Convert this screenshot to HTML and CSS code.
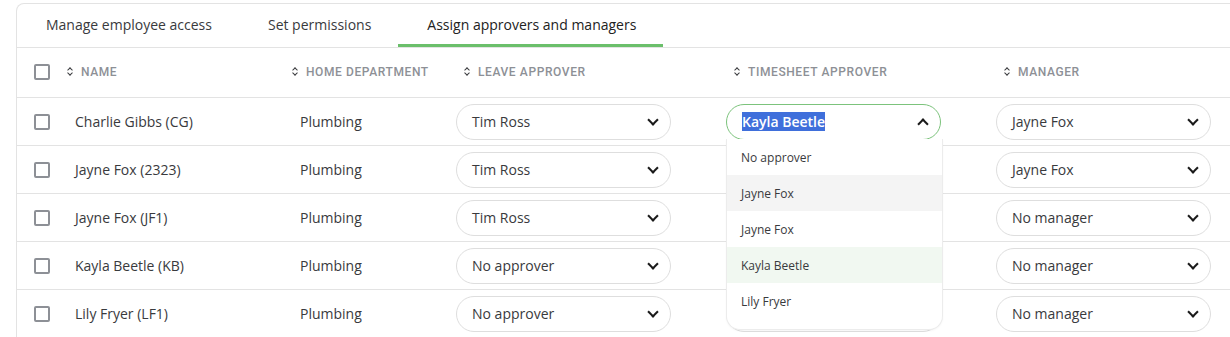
FILE: index.html
```html
<!DOCTYPE html>
<html lang="en">
  <head>
    <meta charset="UTF-8" />
    <meta name="viewport" content="width=device-width, initial-scale=1.0" />
    <title>Assign approvers and managers</title>
    <link rel="stylesheet" href="styles.css">
  </head>
  <body>
    <main>
      <section class="panel">
        <nav class="tabs">
          <a class="tab">Manage employee access</a>
          <a class="tab">Set permissions</a>
          <a class="tab is-active">Assign approvers and managers</a>
        </nav>

        <div class="grid">
          <div class="row head">
            <div class="cell check"><span class="box"></span></div>
            <div class="cell name"><i class="sort"></i>Name</div>
            <div class="cell dept"><i class="sort"></i>Home department</div>
            <div class="cell pick"><i class="sort"></i>Leave approver</div>
            <div class="cell pick"><i class="sort"></i>Timesheet approver</div>
            <div class="cell pick"><i class="sort"></i>Manager</div>
          </div>

          <div class="row">
            <div class="cell check"><span class="box"></span></div>
            <div class="cell name">Charlie Gibbs (CG)</div>
            <div class="cell dept">Plumbing</div>
            <div class="cell pick"><div class="select">Tim Ross<i class="chev"></i></div></div>
            <div class="cell pick">
              <div class="select is-open"><span class="picked">Kayla Beetle</span><i class="chev up"></i></div>
              <ul class="menu">
                <li>No approver</li>
                <li class="is-hover">Jayne Fox</li>
                <li>Jayne Fox</li>
                <li class="is-selected">Kayla Beetle</li>
                <li>Lily Fryer</li>
              </ul>
            </div>
            <div class="cell pick"><div class="select">Jayne Fox<i class="chev"></i></div></div>
          </div>

          <div class="row">
            <div class="cell check"><span class="box"></span></div>
            <div class="cell name">Jayne Fox (2323)</div>
            <div class="cell dept">Plumbing</div>
            <div class="cell pick"><div class="select">Tim Ross<i class="chev"></i></div></div>
            <div class="cell pick"><div class="select"><i class="chev"></i></div></div>
            <div class="cell pick"><div class="select">Jayne Fox<i class="chev"></i></div></div>
          </div>

          <div class="row">
            <div class="cell check"><span class="box"></span></div>
            <div class="cell name">Jayne Fox (JF1)</div>
            <div class="cell dept">Plumbing</div>
            <div class="cell pick"><div class="select">Tim Ross<i class="chev"></i></div></div>
            <div class="cell pick"><div class="select"><i class="chev"></i></div></div>
            <div class="cell pick"><div class="select">No manager<i class="chev"></i></div></div>
          </div>

          <div class="row">
            <div class="cell check"><span class="box"></span></div>
            <div class="cell name">Kayla Beetle (KB)</div>
            <div class="cell dept">Plumbing</div>
            <div class="cell pick"><div class="select">No approver<i class="chev"></i></div></div>
            <div class="cell pick"><div class="select"><i class="chev"></i></div></div>
            <div class="cell pick"><div class="select">No manager<i class="chev"></i></div></div>
          </div>

          <div class="row">
            <div class="cell check"><span class="box"></span></div>
            <div class="cell name">Lily Fryer (LF1)</div>
            <div class="cell dept">Plumbing</div>
            <div class="cell pick"><div class="select">No approver<i class="chev"></i></div></div>
            <div class="cell pick"><div class="select"><i class="chev"></i></div></div>
            <div class="cell pick"><div class="select">No manager<i class="chev"></i></div></div>
          </div>
        </div>
      </section>
    </main>
  </body>
</html>
```

FILE: styles.css
```css
body {
  margin: 0;
  padding: 3px 0 0 16px;
  overflow: hidden;
  background-color: #fff;
  color: #393a3d;
  font-family: "Open Sans", "Liberation Sans", sans-serif;
  font-size: 14px;
}
.panel {
  width: 1240px;
  border: 1px solid #e3e3e3;
  border-bottom: none;
  border-top-left-radius: 8px;
}
.tabs {
  display: flex;
  height: 43px;
  border-bottom: 1px solid #e3e3e3;
}
.tab {
  display: flex;
  align-items: center;
  padding: 0 27px 0 29px;
  font-size: 14px;
  color: #393a3d;
  border-bottom: 3px solid transparent;
  box-sizing: border-box;
}
.tab.is-active {
  color: #222;
  border-bottom-color: #6bbf6b;
}
.row {
  display: grid;
  grid-template-columns: 49px 225px 165px 270px 270px 1fr;
  height: 47px;
  border-bottom: 1px solid #e3e3e3;
}
.row.head {
  padding-bottom: 2px;
}
.cell {
  display: flex;
  align-items: center;
  position: relative;
}
.check {
  padding-left: 17px;
}
.box {
  width: 12px;
  height: 12px;
  border: 2px solid #8d9096;
  border-radius: 2px;
}
.row .name {
  padding-left: 9px;
}
.row .dept {
  padding-left: 9px;
}
.head .cell {
  font-family: "Roboto", "Liberation Sans", sans-serif;
  font-size: 12px;
  font-weight: 500;
  color: #8d9096;
  text-transform: uppercase;
  letter-spacing: 0.6px;
}
.head .name,
.head .dept {
  padding-left: 2px;
}
.head .pick {
  padding-left: 9px;
}
.sort {
  position: relative;
  width: 5px;
  height: 11px;
  margin-right: 8px;
}
.sort::before,
.sort::after {
  content: "";
  position: absolute;
  left: 0;
  width: 3px;
  height: 3px;
  border: solid #393a3d;
  border-width: 1.3px 0 0 1.3px;
}
.sort::before {
  top: 2px;
  transform: rotate(45deg);
}
.sort::after {
  bottom: 2px;
  transform: rotate(225deg);
}
.select {
  display: flex;
  align-items: center;
  justify-content: space-between;
  width: 215px;
  height: 36px;
  box-sizing: border-box;
  padding: 0 13px 0 15px;
  border: 1px solid #dedede;
  border-radius: 18px;
  background-color: #fff;
  font-size: 14px;
}
.select.is-open {
  border-color: #7cc37c;
}
.picked {
  background-color: #3f6fdb;
  color: #fff;
  font-weight: 600;
}
.chev {
  width: 6px;
  height: 6px;
  margin-top: -4px;
  margin-left: auto;
  border: solid #1a1a1a;
  border-width: 0 2px 2px 0;
  transform: rotate(45deg);
}
.chev.up {
  margin-top: 4px;
  transform: rotate(225deg);
}
.menu {
  position: absolute;
  top: 41px;
  left: 0;
  z-index: 2;
  width: 215px;
  margin: 0;
  padding: 0 0 10px;
  list-style: none;
  background-color: #fff;
  border: 1px solid #ececec;
  border-top: none;
  border-radius: 0 0 14px 14px;
  box-shadow: 0 1px 2px rgba(0, 0, 0, 0.04);
  font-size: 12px;
}
.menu li {
  display: flex;
  align-items: center;
  height: 36px;
  padding-left: 14px;
}
.menu .is-hover {
  background-color: #f4f4f4;
}
.menu .is-selected {
  background-color: #f1f8f1;
}
```
